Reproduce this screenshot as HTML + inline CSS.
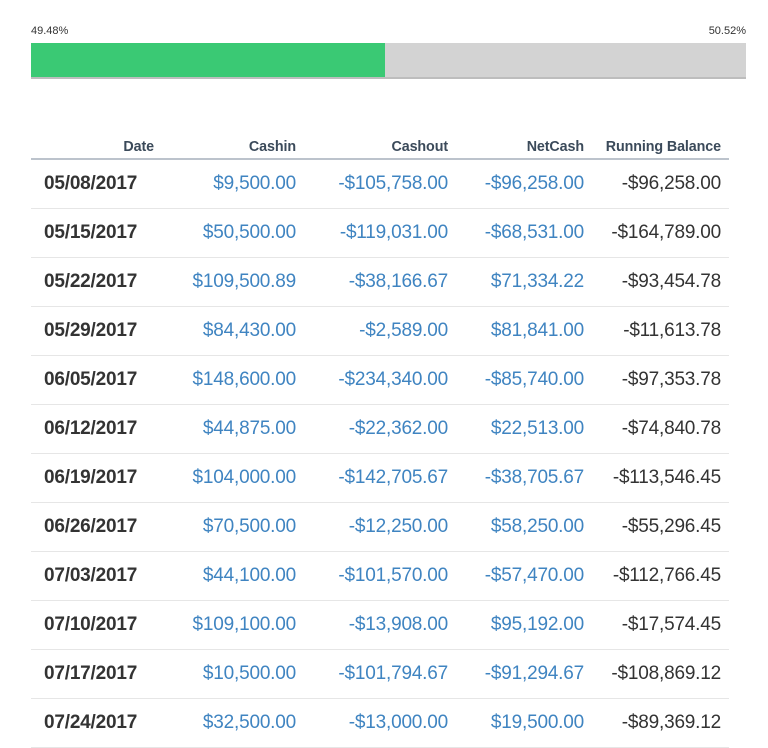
<!DOCTYPE html>
<html><head><style>
body{margin:0;background:#fff;font-family:"Liberation Sans",sans-serif;width:768px;height:747px;overflow:hidden;position:relative}
.pl{position:absolute;top:25px;font-size:11px;color:#333}
.bar{position:absolute;left:31px;top:43px;width:715px;height:36px;background:#d3d3d3;border-bottom:2px solid #bdbdbd;box-sizing:border-box}
.g{position:absolute;left:0;top:0;width:354px;height:34px;background:#3ac974}
table{position:absolute;left:31px;top:133px;width:698px;border-collapse:collapse}
th{font-size:14.3px;font-weight:bold;color:#3b4a5a;text-align:right;padding:0 8px 3px 0;height:22px;border-bottom:2px solid #bcc3cc;vertical-align:bottom;letter-spacing:-0.1px}
td{height:48px;border-bottom:1px solid #e6e6e6;font-size:19px;text-align:right;padding:0 8px 0 0;color:#3f84c1;letter-spacing:-0.2px}
td:first-child{text-align:left;padding-left:13px;font-weight:bold;color:#333}
td:last-child{color:#333}
</style></head><body>
<div class="pl" style="left:31px">49.48%</div>
<div class="pl" style="right:22px">50.52%</div>
<div class="bar"><div class="g"></div></div>
<table>
<colgroup><col style="width:131px"><col style="width:142px"><col style="width:152px"><col style="width:136px"><col style="width:137px"></colgroup>
<tr><th>Date</th><th>Cashin</th><th>Cashout</th><th>NetCash</th><th>Running Balance</th></tr>
<tr><td>05/08/2017</td><td>$9,500.00</td><td>-$105,758.00</td><td>-$96,258.00</td><td>-$96,258.00</td></tr>
<tr><td>05/15/2017</td><td>$50,500.00</td><td>-$119,031.00</td><td>-$68,531.00</td><td>-$164,789.00</td></tr>
<tr><td>05/22/2017</td><td>$109,500.89</td><td>-$38,166.67</td><td>$71,334.22</td><td>-$93,454.78</td></tr>
<tr><td>05/29/2017</td><td>$84,430.00</td><td>-$2,589.00</td><td>$81,841.00</td><td>-$11,613.78</td></tr>
<tr><td>06/05/2017</td><td>$148,600.00</td><td>-$234,340.00</td><td>-$85,740.00</td><td>-$97,353.78</td></tr>
<tr><td>06/12/2017</td><td>$44,875.00</td><td>-$22,362.00</td><td>$22,513.00</td><td>-$74,840.78</td></tr>
<tr><td>06/19/2017</td><td>$104,000.00</td><td>-$142,705.67</td><td>-$38,705.67</td><td>-$113,546.45</td></tr>
<tr><td>06/26/2017</td><td>$70,500.00</td><td>-$12,250.00</td><td>$58,250.00</td><td>-$55,296.45</td></tr>
<tr><td>07/03/2017</td><td>$44,100.00</td><td>-$101,570.00</td><td>-$57,470.00</td><td>-$112,766.45</td></tr>
<tr><td>07/10/2017</td><td>$109,100.00</td><td>-$13,908.00</td><td>$95,192.00</td><td>-$17,574.45</td></tr>
<tr><td>07/17/2017</td><td>$10,500.00</td><td>-$101,794.67</td><td>-$91,294.67</td><td>-$108,869.12</td></tr>
<tr><td>07/24/2017</td><td>$32,500.00</td><td>-$13,000.00</td><td>$19,500.00</td><td>-$89,369.12</td></tr>
</table>
</body></html>
